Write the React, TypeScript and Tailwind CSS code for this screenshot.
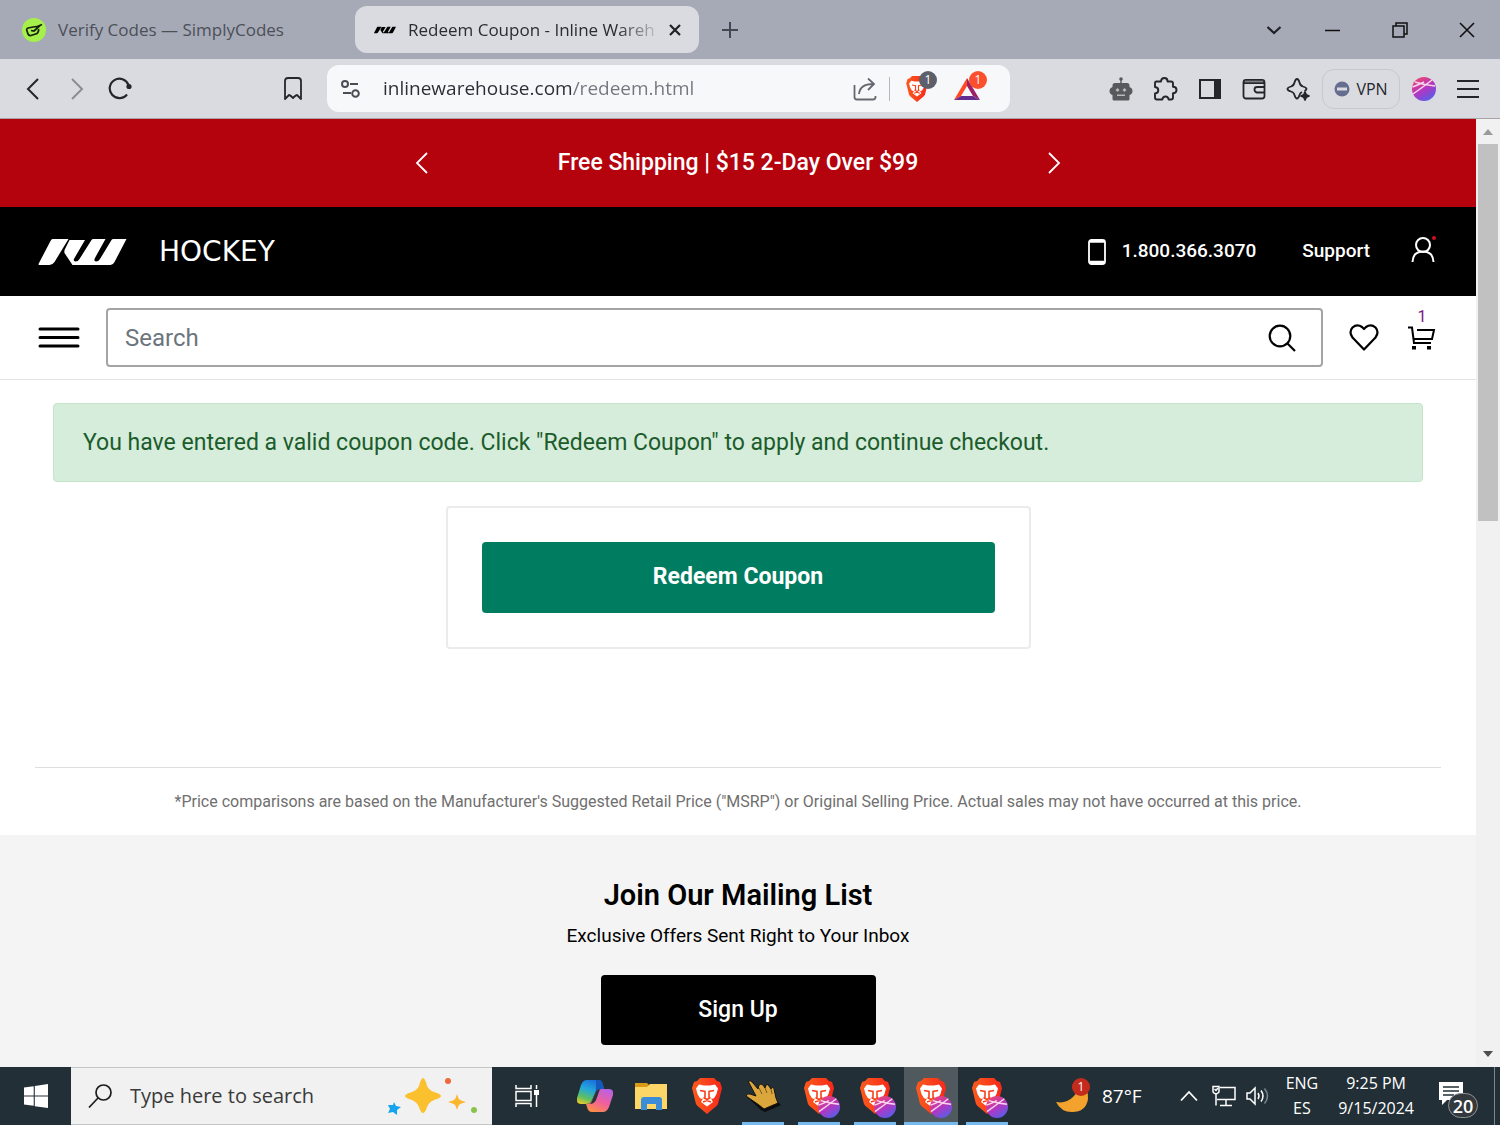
import { useId, type ReactNode } from "react";

function IwMark({ className }: { className: string }) {
  return (
    <svg viewBox="0 0 88 26" className={className} fill="currentColor" aria-hidden="true">
      <path d="M14 0H30L16 23Q14 26 11 26H0.500Q-0.500 25.500 0.500 24L12 2Q13 0 14 0Z" />
      <path d="M31 1H46.500L36 19Q34 22 37 22.500Q39.500 22.500 41 20L53 1Q53.500 0 55 0H67L57 18Q54.500 22 57.500 22.500Q60 22.500 61.500 20L73 1Q73.500 0 75 0H88L76 23Q74.500 26 72 26H34L26 14Q25.500 12 26.500 10Z" />
    </svg>
  );
}

function BraveIcon({ className }: { className: string }) {
  const id = useId();
  return (
    <svg viewBox="0 0 30 36" className={className} aria-hidden="true">
      <defs>
        <linearGradient id={id} x1="0" y1="0.500" x2="1" y2="0.500">
          <stop offset="0" stopColor="#fb5b1c" />
          <stop offset="1" stopColor="#f8281a" />
        </linearGradient>
      </defs>
      <path d="M8 0H22L25 3 28 4 30 10 29 14 26 26Q25 28 22 30L15 36 8 30Q5 28 4 26L1 14 0 10 2 4 5 3Z" fill={`url(#${id})`} />
      <path d="M7 6.500L12 7.500H18L23 6.500 26 10.500 24.500 16 22.500 19.500Q21 21.500 19 20.500L21 24 15 28.500 9 24 11 20.500Q9 21.500 7.500 19.500L5.500 16 4 10.500Z" fill="#fff" />
      <path d="M8 12.500L13 13.500V19.500M22 12.500L17 13.500V19.500M11.500 19.500L15 21.500 18.500 19.500M11 24L15 22.500 19 24" fill="none" stroke="#f8401a" strokeWidth="1.600" />
    </svg>
  );
}

function ProfileBall({ className }: { className: string }) {
  const id = useId();
  return (
    <svg viewBox="0 0 24 24" className={className} aria-hidden="true">
      <defs>
        <linearGradient id={id} x1="0.200" y1="0" x2="0.800" y2="1">
          <stop offset="0" stopColor="#f0456b" />
          <stop offset="0.500" stopColor="#b436c0" />
          <stop offset="1" stopColor="#4f62ee" />
        </linearGradient>
      </defs>
      <circle cx="12" cy="12" r="12" fill={`url(#${id})`} />
      <path d="M1 17Q11 10 20 3M3 5Q12 8 23 9M0.500 10Q6 8 12 5" stroke="#f9d6ee" strokeWidth="1.500" fill="none" />
    </svg>
  );
}

function BraveProfileIcon() {
  return (
    <span className="relative block">
      <BraveIcon className="h-9 w-[30px]" />
      <ProfileBall className="absolute -right-1.5 -bottom-1 size-[22px]" />
    </span>
  );
}

function RobotIcon() {
  return (
    <svg viewBox="0 0 24 24" className="size-6" fill="#58595d" aria-hidden="true">
      <circle cx="12" cy="2" r="1.800" />
      <path d="M11.300 2h1.400v5h-1.400zM6 6h12q2.500 0 2.500 2.500V10q3 1 3 4t-3 4v4q0 1.500-1.500 1.500H5Q3.500 23.500 3.500 22v-4q-3-1-3-4t3-4V8.500Q3.500 6 6 6z" />
      <path d="M8.500 11l2 2-2 2-2-2zM15.500 11l2 2-2 2-2-2zM8 17.500h8V19H8z" fill="#b9babd" />
    </svg>
  );
}

function Sparkles() {
  return (
    <svg viewBox="0 0 90 38" className="h-[38px] w-[90px]" aria-hidden="true">
      <path d="M36 1Q38 1 40 9 42 13 47 15 54 17 54 19T47 23Q42 25 40 30 38 36 36 36T32 30Q30 25 25 23 18 21 18 19T25 15Q30 13 32 9 34 1 36 1Z" fill="#fbc02d" />
      <path d="M70 17q1.500 5 2.500 5.500 1 1 6.500 2.500-5.500 1.500-6.500 2.500-1 .5-2.500 5.500-1.500-5-2.500-5.500-1-1-6.500-2.500 5.500-1.500 6.500-2.500 1-.5 2.500-5.500z" fill="#fbb62b" />
      <path d="M7 25l2 4 5 1-4 3 0 5-4-3-5 1 2-4-2-4 5 0z" fill="#15a3ee" />
      <circle cx="61" cy="4" r="3" fill="#f0683a" />
      <circle cx="87" cy="33" r="3" fill="#8bc34a" />
    </svg>
  );
}

function CopilotIcon() {
  return (
    <svg viewBox="0 0 36 32" className="h-8 w-9" aria-hidden="true">
      <defs>
        <linearGradient id="copilot-cool" x1="0.600" y1="0" x2="0.200" y2="1">
          <stop offset="0" stopColor="#1c6fdc" />
          <stop offset="0.400" stopColor="#23a7dd" />
          <stop offset="0.750" stopColor="#5fc060" />
          <stop offset="1" stopColor="#e5c92c" />
        </linearGradient>
        <linearGradient id="copilot-warm" x1="0.800" y1="0" x2="0.300" y2="1">
          <stop offset="0" stopColor="#b661e6" />
          <stop offset="0.550" stopColor="#f0609c" />
          <stop offset="1" stopColor="#fb8d48" />
        </linearGradient>
      </defs>
      <path d="M10 0H21Q25 0 26 5L27 9H22Q19 9 18 13L15 20Q13 24 9 24H4Q-1 24 0 18L4 5Q6 0 10 0Z" fill="url(#copilot-cool)" />
      <path d="M19 0H22Q25 0 26 5L27 9H22Q20 9 19 11Z" fill="#1659bd" />
      <path d="M26 32H15Q11 32 10 27L9 24Q14 24 16 19L19 12Q21 9 24 9H32Q37 9 36 15L32 27Q30 32 26 32Z" fill="url(#copilot-warm)" />
      <path d="M16 19L19 12Q21 9 23 9L19 20Q17 24 13 24Q15 22 16 19Z" fill="#26343a" />
    </svg>
  );
}

function ExplorerIcon() {
  return (
    <svg viewBox="0 0 32 28" className="h-7 w-8" aria-hidden="true">
      <path d="M0 1H12L15 4V8H0Z" fill="#d99a16" />
      <path d="M0 5H12L15 2H32V27H0Z" fill="#fcd667" />
      <path d="M6 28V18Q6 15 9 15H24Q27 15 27 18V28H21V22H12V28Z" fill="#3b8dd8" />
    </svg>
  );
}

function HandIcon() {
  return (
    <svg viewBox="0 0 36 32" className="h-8 w-9" aria-hidden="true">
      <path d="M2 17L16 30 20 32 36 25 33 22 18 26 5 15Z" fill="#0c0d0e" />
      <path d="M3 1Q6 0 8 3L13 9 14 5Q16 3 18 5L20 8 21 5Q23 4 24 6L26 9 27 7Q29 7 29 9L31 18 33 23 19 29 14 25 1 16Q2 13 5 14L11 16Z" fill="#dba63c" stroke="#171310" strokeWidth="1" />
      <path d="M14 8l3 6M20 8l2 5M26 9l1 5" stroke="#7b591c" strokeWidth="1" />
    </svg>
  );
}

function MoonIcon() {
  return (
    <span className="relative block h-9 w-[34px]">
      <svg viewBox="0 0 34 36" className="size-full" aria-hidden="true">
        <path d="M0 24Q10 26 17 19T23 6Q33 10 32 21 30 34 16 34 5 34 0 24Z" fill="#f3a32d" />
      </svg>
      <span className="absolute top-0 right-0 flex size-[18px] items-center justify-center rounded-full bg-[#c42b1c] text-xs text-white">
        1
      </span>
    </span>
  );
}

function BrowserTabs() {
  return (
    <div className="flex h-[59px] shrink-0 items-center bg-[#a6aab7] font-['Open_Sans',sans-serif] text-[17px] text-[#2a2c33]">
      <button type="button" className="flex w-[355px] items-center gap-3 pl-[22px] text-[#4c4f58]">
        <svg viewBox="0 0 24 24" className="size-6" aria-hidden="true">
          <circle cx="12" cy="12" r="12" fill="#a5f04a" />
          <path d="M14 8.500L6 10Q4 11 5 13L6 16Q7 18 9 17.500L15 15.500Q17 14 16.500 11M9 12.500L12 13 18 7.500M14 9L20 6.500" fill="none" stroke="#16200c" strokeWidth="1.700" />
        </svg>
        Verify Codes — SimplyCodes
      </button>
      <div className="flex h-[47px] w-[344px] items-center rounded-xl bg-[#dadbe0] pr-3 pl-[19px]">
        <IwMark className="h-2 w-[22px] shrink-0 text-black" />
        <span className="ml-3 flex-1 whitespace-nowrap [mask-image:linear-gradient(90deg,black_82%,transparent)]">
          Redeem Coupon - Inline Wareh
        </span>
        <button type="button" aria-label="Close tab" className="p-1.5">
          <svg viewBox="0 0 12 12" className="size-3" stroke="#1f2126" strokeWidth="2.200" aria-hidden="true">
            <path d="M1 1l10 10M11 1L1 11" />
          </svg>
        </button>
      </div>
      <button type="button" aria-label="New tab" className="ml-[23px]">
        <svg viewBox="0 0 16 16" className="size-4" stroke="#44474f" strokeWidth="2" aria-hidden="true">
          <path d="M8 0v16M0 8h16" />
        </svg>
      </button>
      <div className="ml-auto flex items-center pr-[25px]">
        <button type="button" aria-label="Search tabs" className="mr-[43px]">
          <svg viewBox="0 0 16 16" className="size-4" fill="none" stroke="#1f2126" strokeWidth="2.200" aria-hidden="true">
            <path d="M1.500 5L8 11l6.500-6" />
          </svg>
        </button>
        <button type="button" aria-label="Minimize" className="mr-[51px]">
          <svg viewBox="0 0 16 16" className="size-4" stroke="#111" strokeWidth="1.500" aria-hidden="true">
            <path d="M0 8.500h15" />
          </svg>
        </button>
        <button type="button" aria-label="Restore" className="mr-[51px]">
          <svg viewBox="0 0 16 16" className="size-4" fill="none" stroke="#111" strokeWidth="1.500" aria-hidden="true">
            <path d="M1 4h11v11H1zM4 4V1h11v11h-3" />
          </svg>
        </button>
        <button type="button" aria-label="Close">
          <svg viewBox="0 0 16 16" className="size-4" stroke="#111" strokeWidth="1.600" aria-hidden="true">
            <path d="M1 1l14 14M15 1L1 15" />
          </svg>
        </button>
      </div>
    </div>
  );
}

function Toolbar() {
  return (
    <div className="flex h-[60px] shrink-0 items-center border-b border-[#a9a3a8] bg-[#dadbe0] pr-5 pl-[26px] font-['Open_Sans',sans-serif] text-[#24262c]">
      <button type="button" aria-label="Back">
        <svg viewBox="0 0 14 22" className="h-[22px] w-3.5" fill="none" stroke="currentColor" strokeWidth="2" aria-hidden="true">
          <path d="M12 1L2 11l10 10" />
        </svg>
      </button>
      <button type="button" aria-label="Forward" className="ml-[30px] text-[#8b8d94]">
        <svg viewBox="0 0 14 22" className="h-[22px] w-3.5" fill="none" stroke="currentColor" strokeWidth="2" aria-hidden="true">
          <path d="M2 1l10 10L2 21" />
        </svg>
      </button>
      <button type="button" aria-label="Reload" className="ml-6">
        <svg viewBox="0 0 24 24" className="size-6" fill="none" stroke="currentColor" strokeWidth="2.200" aria-hidden="true">
          <path d="M19 17.500A9.700 9.700 0 1 1 20.500 8" />
          <circle cx="21" cy="9.500" r="2.600" fill="currentColor" stroke="none" />
        </svg>
      </button>
      <button type="button" aria-label="Bookmark" className="ml-[152px]">
        <svg viewBox="0 0 18 24" className="h-6 w-[18px]" fill="none" stroke="currentColor" strokeWidth="1.800" strokeLinejoin="round" aria-hidden="true">
          <path d="M1 22V4q0-3 3-3h10q3 0 3 3v18l-4-4q-1 0-4 3-3-3-4-3z" />
        </svg>
      </button>
      <div className="ml-[25px] flex h-[47px] w-[683px] items-center rounded-xl bg-[#f7f8fa] pr-[30px] pl-3.5">
        <svg viewBox="0 0 20 20" className="size-5 shrink-0" fill="none" stroke="#4a4d54" strokeWidth="2" aria-hidden="true">
          <circle cx="4" cy="5" r="3" />
          <path d="M9 5h8M2 14h8" />
          <circle cx="14.500" cy="14.500" r="3.300" />
        </svg>
        <input
          type="text"
          aria-label="Address"
          defaultValue="inlinewarehouse.com/redeem.html"
          className="ml-[22px] min-w-0 flex-1 bg-[linear-gradient(90deg,#2b2d33_190px,#73767d_190px)] bg-clip-text text-[19px] text-transparent outline-none"
        />
        <button type="button" aria-label="Share">
          <svg viewBox="0 0 24 24" className="size-6" fill="none" stroke="#65686f" strokeWidth="1.800" aria-hidden="true">
            <path d="M1.500 8v12q0 2.500 2.500 2.500h16q2.500 0 2.500-2.500v-1M6 17Q7 7 20 7M15 1.500L21 7l-6 6" />
          </svg>
        </button>
        <span className="ml-3 h-6 w-px bg-[#b4b6bb]" />
        <button type="button" aria-label="Brave Shields" className="relative ml-4">
          <BraveIcon className="h-[26px] w-[22px]" />
          <span className="absolute -top-[5px] -right-[9px] flex size-[18px] items-center justify-center rounded-full bg-[#5d5f6b] text-xs text-white">
            1
          </span>
        </button>
        <button type="button" aria-label="Brave Rewards" className="relative ml-[26px]">
          <svg viewBox="0 0 26 26" className="size-[26px]" aria-hidden="true">
            <path d="M13 2L0 24 7 20 13 10Z" fill="#ff4a24" />
            <path d="M13 2L26 24 19 20 13 10Z" fill="#9e1f63" />
            <path d="M0 24H26L19 20H7Z" fill="#662d91" />
          </svg>
          <span className="absolute -top-[5px] -right-[7px] flex size-[18px] items-center justify-center rounded-full bg-[#fb4f2d] text-xs text-white">
            1
          </span>
        </button>
      </div>
      <div className="ml-auto flex items-center gap-5">
        <button type="button" aria-label="Robot extension">
          <RobotIcon />
        </button>
        <button type="button" aria-label="Extensions">
          <svg viewBox="0 0 25 24" className="h-6 w-[25px]" fill="none" stroke="currentColor" strokeWidth="1.900" strokeLinejoin="round" aria-hidden="true">
            <path d="M3.500 4.500H8q0-3.500 3.300-3.500t3.300 3.500H18q2 0 2 2v3.300q3.500 0 3.500 3.200T20 16.300V20.500q0 2-2 2h-2.300q-.5-3-3.200-3t-3.200 3H4q-2 0-2-2v-4q3.300-.3 3.300-3.200T2 10V6q0-1.500 1.500-1.500z" />
          </svg>
        </button>
        <button type="button" aria-label="Sidebar">
          <svg viewBox="0 0 24 24" className="size-6" aria-hidden="true">
            <path d="M2 3h20v18H2z" fill="none" stroke="currentColor" strokeWidth="2" />
            <path d="M16 2h7v20h-7z" fill="currentColor" />
          </svg>
        </button>
        <button type="button" aria-label="Wallet">
          <svg viewBox="0 0 24 24" className="size-6" fill="none" stroke="currentColor" strokeWidth="1.800" aria-hidden="true">
            <rect x="1.500" y="3" width="21" height="18.500" rx="2.500" />
            <path d="M2 6h20M22 10h-7q-2.500 0-2.500 2.500T15 15.500h7" />
            <path d="M3 4.500h18" stroke="#7b7d83" />
          </svg>
        </button>
        <button type="button" aria-label="Leo AI">
          <svg viewBox="0 0 24 24" className="size-6" fill="none" stroke="currentColor" strokeWidth="1.800" strokeLinejoin="round" aria-hidden="true">
            <path d="M16 15Q14 16 13.500 18 12.500 21.500 11 21.500T8.500 18Q8 15.500 5 14.500 1.500 13.500 1.500 12T5 9.500Q8 8.500 8.500 5.500 9.500 2 11 2T13.500 5.500Q14 8.500 17 9.500 20.500 10.500 20.500 12 20.500 13 18.500 14" />
            <path d="M19 15l1.200 2.800 2.800 1.200-2.800 1.200L19 23l-1.200-2.800-2.800-1.200 2.800-1.200z" fill="currentColor" />
          </svg>
        </button>
      </div>
      <button type="button" className="ml-3 flex h-10 w-[78px] items-center justify-center gap-1.5 rounded-xl border border-[#c6c8ce] text-base">
        <svg viewBox="0 0 16 16" className="size-4" aria-hidden="true">
          <circle cx="8" cy="8" r="7.500" fill="#666e90" />
          <path d="M3 6.500h10v3H3z" fill="#dadbe0" />
        </svg>
        VPN
      </button>
      <button type="button" aria-label="Profile" className="ml-3">
        <ProfileBall className="size-6" />
      </button>
      <button type="button" aria-label="Menu" className="ml-5">
        <svg viewBox="0 0 24 24" className="size-6" stroke="currentColor" strokeWidth="2" aria-hidden="true">
          <path d="M1 4h22M1 12h22M1 20h22" />
        </svg>
      </button>
    </div>
  );
}

function SiteHeader() {
  return (
    <header>
      <div className="flex h-[88px] items-center justify-center bg-[#b5030d] text-[23px] font-medium text-white">
        <button type="button" aria-label="Previous offer">
          <svg viewBox="0 0 14 22" className="h-[22px] w-3.5" fill="none" stroke="currentColor" strokeWidth="1.800" aria-hidden="true">
            <path d="M12 1L2 11l10 10" />
          </svg>
        </button>
        <p className="w-[618px] text-center">Free Shipping | $15 2-Day Over $99</p>
        <button type="button" aria-label="Next offer">
          <svg viewBox="0 0 14 22" className="h-[22px] w-3.5" fill="none" stroke="currentColor" strokeWidth="1.800" aria-hidden="true">
            <path d="M2 1l10 10L2 21" />
          </svg>
        </button>
      </div>

      <div className="flex h-[89px] items-center bg-black px-10 text-[19px] font-medium text-white">
        <a href="#home" className="-ml-0.5 flex items-center gap-8">
          <IwMark className="h-[26px] w-[89px]" />
          <span className="font-['DejaVu_Sans',sans-serif] text-[28px] font-normal">HOCKEY</span>
        </a>
        <a href="#phone" className="ml-auto flex items-center gap-4">
          <svg viewBox="0 0 18 26" className="h-[26px] w-[18px]" fill="none" stroke="currentColor" aria-hidden="true">
            <rect x="1" y="1" width="16" height="24" rx="2.500" strokeWidth="1.800" />
            <path d="M2 2.500h14M2 23h14" strokeWidth="2.500" />
          </svg>
          1.800.366.3070
        </a>
        <a href="#support" className="ml-[46px]">Support</a>
        <a href="#account" aria-label="Account" className="relative ml-10">
          <svg viewBox="0 0 26 32" className="h-8 w-[26px]" fill="none" stroke="currentColor" strokeWidth="2" aria-hidden="true">
            <circle cx="13" cy="9" r="7" />
            <path d="M2.500 26Q3 15.500 13 15.500T23.500 26" />
          </svg>
          <span className="absolute top-0 right-0 size-1 rounded-full bg-[#d3101c]" />
        </a>
      </div>

      <div className="flex items-center border-b border-[#e4e4e4] py-3 pr-10 pl-[38px]">
        <button type="button" aria-label="Open menu">
          <svg viewBox="0 0 42 22" className="h-[22px] w-[42px]" stroke="#000" strokeWidth="3" strokeLinecap="round" aria-hidden="true">
            <path d="M2 2h38M2 10.500h38M2 19h38" />
          </svg>
        </button>
        <form className="ml-[26px] flex h-[59px] flex-1 items-center rounded border-2 border-[#a3a5a5] pr-[25px] pl-[17px]">
          <input
            type="search"
            aria-label="Search"
            placeholder="Search"
            className="min-w-0 flex-1 text-2xl outline-none placeholder:text-[#6c757d]"
          />
          <button type="submit" aria-label="Submit search">
            <svg viewBox="0 0 28 28" className="size-7" fill="none" stroke="#000" strokeWidth="2.200" aria-hidden="true">
              <circle cx="12" cy="12" r="10.300" />
              <path d="M19.500 19.500L27 27" />
            </svg>
          </button>
        </form>
        <a href="#wishlist" aria-label="Wish list" className="ml-[26px]">
          <svg viewBox="0 0 30 27" className="h-[27px] w-[30px]" fill="none" stroke="#000" strokeWidth="2.200" strokeLinejoin="round" aria-hidden="true">
            <path d="M15 25.500L3.500 13.500Q-0.500 8 3.500 3.500 8-0.500 13 3L15 5l2-2Q22-0.500 26.500 3.500 30.500 8 26.500 13.500Z" />
          </svg>
        </a>
        <a href="#cart" className="relative ml-[29px]">
          <svg viewBox="0 0 28 26" className="h-[26px] w-7" fill="none" stroke="#000" strokeWidth="2" aria-hidden="true">
            <path d="M0 2.500h4l2 15.500h17M9 5h17l-2 9H6" />
            <path d="M4 21h4v3.500H4zM19 21h4v3.500h-4z" fill="#000" stroke="none" />
          </svg>
          <span className="absolute -top-5 left-0 w-full text-center text-base text-[#7b1a7d]">1</span>
        </a>
      </div>
    </header>
  );
}

function TaskButton({
  label,
  running,
  active,
  children,
}: {
  label: string;
  running?: boolean;
  active?: boolean;
  children: ReactNode;
}) {
  return (
    <button
      type="button"
      aria-label={label}
      className={`relative flex h-full w-[54px] items-center justify-center ${active ? "bg-[#50595e]" : ""}`}
    >
      {children}
      {running && (
        <span className={`absolute bottom-0 h-[3px] bg-[#76b9ed] ${active ? "inset-x-0" : "inset-x-1.5"}`} />
      )}
    </button>
  );
}

function Taskbar() {
  return (
    <div className="flex h-[58px] shrink-0 items-center bg-[#232f36] font-['Open_Sans',sans-serif] text-base text-white">
      <button type="button" aria-label="Start" className="flex w-[71px] justify-center">
        <svg viewBox="0 0 24 24" className="size-6" fill="#fff" aria-hidden="true">
          <path d="M0 3.500L9.700 2.200v9.300H0zM10.800 2L24 0v11.500H10.800zM0 12.500h9.700v9.300L0 20.500zM10.800 12.500H24V24l-13.200-1.800z" />
        </svg>
      </button>
      <label className="flex h-full w-[421px] items-center border-y border-[#c3c5c6] bg-[#f1f1f1] pr-[15px] pl-[17px]">
        <svg viewBox="0 0 24 24" className="size-6 shrink-0" fill="none" stroke="#1c1c1c" strokeWidth="1.700" aria-hidden="true">
          <circle cx="15.500" cy="8.500" r="7.500" />
          <path d="M10 14L1 23.500" />
        </svg>
        <input
          type="text"
          aria-label="Type here to search"
          placeholder="Type here to search"
          className="ml-[18px] min-w-0 flex-1 text-xl outline-none placeholder:text-[#3a3a3a]"
        />
        <Sparkles />
      </label>
      <button type="button" aria-label="Task view" className="mr-1.5 flex w-[70px] justify-center">
        <svg viewBox="0 0 24 24" className="size-6" fill="none" stroke="#fff" strokeWidth="1.500" aria-hidden="true">
          <path d="M1 1v3.500h15V1M1 23v-3.500h15V23M1 7.500h15v9H1zM21.500 1v4M21.500 11v12" />
          <path d="M19 6h5v5h-5z" fill="#fff" stroke="none" />
        </svg>
      </button>
      <div className="flex h-full gap-0.5">
        <TaskButton label="Copilot">
          <CopilotIcon />
        </TaskButton>
        <TaskButton label="File Explorer">
          <ExplorerIcon />
        </TaskButton>
        <TaskButton label="Brave">
          <BraveIcon className="h-9 w-[30px]" />
        </TaskButton>
        <TaskButton label="Pointer" running>
          <HandIcon />
        </TaskButton>
        <TaskButton label="Brave profile 1" running>
          <BraveProfileIcon />
        </TaskButton>
        <TaskButton label="Brave profile 2" running>
          <BraveProfileIcon />
        </TaskButton>
        <TaskButton label="Brave profile 3" running active>
          <BraveProfileIcon />
        </TaskButton>
        <TaskButton label="Brave profile 4" running>
          <BraveProfileIcon />
        </TaskButton>
      </div>
      <div className="ml-auto flex h-full items-center">
        <button type="button" className="flex items-center gap-3 text-[19px]">
          <MoonIcon />
          87°F
        </button>
        <button type="button" aria-label="Show hidden icons" className="ml-[38px]">
          <svg viewBox="0 0 18 12" className="h-3 w-[18px]" fill="none" stroke="#fff" strokeWidth="1.800" aria-hidden="true">
            <path d="M1 10.500L9 2l8 8.500" />
          </svg>
        </button>
        <button type="button" aria-label="Network" className="ml-3.5">
          <svg viewBox="0 0 24 22" className="h-[22px] w-6" fill="none" stroke="#fff" strokeWidth="1.500" aria-hidden="true">
            <path d="M8 2.500h15v12H5M14 15v5M8 20.500h12M4 9v11.500M1 1.500h6v5q0 1.500-3 2.500-3-1-3-2.500z" />
            <path d="M2.500 4l1.500 1.500L6 3" />
          </svg>
        </button>
        <button type="button" aria-label="Volume" className="ml-2.5">
          <svg viewBox="0 0 24 20" className="h-5 w-6" fill="none" stroke="#fff" strokeWidth="1.500" aria-hidden="true">
            <path d="M1 7h3l5-5v16l-5-5H1zM12 7q2 3 0 6M15 4.500q4 5.500 0 11" />
            <path d="M18.500 2.500q6 7.500 0 15" stroke="#7e878c" />
          </svg>
        </button>
        <button type="button" className="ml-4 text-center leading-[25px]">
          ENG
          <br />
          ES
        </button>
        <button type="button" className="ml-5 text-center leading-[25px]">
          9:25 PM
          <br />
          9/15/2024
        </button>
        <button type="button" aria-label="20 notifications" className="relative ml-6 h-10 w-10">
          <svg viewBox="0 0 40 40" className="size-10" aria-hidden="true">
            <path d="M1 6h24v18H9l-5 5v-5H1z" fill="#fff" />
            <path d="M5 11h16M5 15h16M5 19h11" stroke="#232f36" strokeWidth="1.600" />
          </svg>
          <span className="absolute right-0 -bottom-0.5 flex h-[25px] w-[30px] items-center justify-center rounded-full border border-[#8d9295] bg-[#33393c] text-lg font-semibold">
            20
          </span>
        </button>
        <span className="ml-4 h-full w-1.5 border-l border-[#7d868b]" />
      </div>
    </div>
  );
}

export default function App() {
  return (
    <div className="flex h-screen flex-col overflow-hidden bg-white">
      <BrowserTabs />
      <Toolbar />

      <div className="flex min-h-0 flex-1">
        <div className="min-w-0 flex-1 overflow-hidden font-[Roboto,sans-serif]">
          <SiteHeader />

          <main className="px-[35px] pt-[23px]">
            <p className="mx-[18px] rounded border border-[#c3e6cb] bg-[#d5edda] px-[29px] py-5 text-[23px] leading-[37px] text-[#1c5c2c]">
              You have entered a valid coupon code. Click "Redeem Coupon" to apply and continue checkout.
            </p>
            <form className="mx-auto mt-6 max-w-[585px] rounded border-2 border-[#ebebeb] p-[34px]">
              <button type="button" className="h-[71px] w-full rounded bg-[#007d61] text-[23px] font-bold text-white">
                Redeem Coupon
              </button>
            </form>
            <p className="mt-[118px] border-t border-[#dedede] py-5 text-center text-base leading-[27px] text-[#6f6f6f]">
              *Price comparisons are based on the Manufacturer's Suggested Retail Price ("MSRP") or Original Selling
              Price. Actual sales may not have occurred at this price.
            </p>
          </main>

          <footer className="flex flex-col items-center bg-[#f4f4f4] pt-10 pb-12 text-black">
            <h2 className="text-[29px] leading-10 font-semibold">Join Our Mailing List</h2>
            <p className="mt-1.5 text-[19px] leading-[30px]">Exclusive Offers Sent Right to Your Inbox</p>
            <button type="button" className="mt-6 h-[70px] w-[275px] rounded bg-black text-[23px] font-medium text-white">
              Sign Up
            </button>
          </footer>
        </div>

        <div className="flex w-6 shrink-0 flex-col items-center bg-[#f1f1f1] py-2.5" aria-hidden="true">
          <svg viewBox="0 0 10 6" className="h-1.5 w-2.5" fill="#9a9a9a">
            <path d="M5 0l5 6H0z" />
          </svg>
          <div className="my-[9px] min-h-0 w-full flex-1 px-0.5">
            <div className="h-[42%] bg-[#c1c1c1]" />
          </div>
          <svg viewBox="0 0 10 6" className="h-1.5 w-2.5" fill="#4d4d4d">
            <path d="M0 0h10L5 6z" />
          </svg>
        </div>
      </div>

      <Taskbar />
    </div>
  );
}
